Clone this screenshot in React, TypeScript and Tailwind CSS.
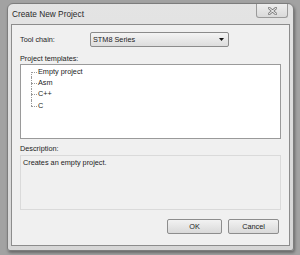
export default function App() {
  const items = ["Empty project", "Asm", "C++", "C"];

  return (
    <div
      className="flex h-[255px] w-[300px] bg-[#a2a2a2] pl-[7px] pt-[3px]"
      style={{ fontFamily: '"Liberation Sans", Arial, sans-serif' }}
    >
      {/* Window frame */}
      <div className="flex h-[248px] w-[287px] flex-col rounded-t-[6px] rounded-b-[3px] border border-[#7d7d7d] bg-gradient-to-b from-[#e4e4e4] to-[#d6d6d6] px-[3px] pb-[4px] shadow-[1px_2px_3px_rgba(0,0,0,0.35)]">
        {/* Title bar */}
        <div className="flex h-[20px] shrink-0 items-start">
          <span className="mt-[5px] pl-[1px] text-[8.3px] leading-[10px] text-[#2a2a2a]">Create New Project</span>
          <div className="ml-auto mr-[2px] flex h-[14px] w-[32px] items-center justify-center rounded-b-[3px] border border-t-0 border-[#9a9a9a] bg-gradient-to-b from-[#eeeeee] to-[#dadada]">
            <svg width="9" height="8" viewBox="0 0 9 8">
              <path d="M1 1 L8 7 M8 1 L1 7" stroke="#6e6e6e" strokeWidth="2.6" strokeLinecap="square" />
              <path d="M1 1 L8 7 M8 1 L1 7" stroke="#e6e6e6" strokeWidth="1.1" strokeLinecap="square" />
            </svg>
          </div>
        </div>

        {/* Client area */}
        <div className="flex flex-1 flex-col border border-[#8c8c8c] bg-[#f0f0f0] px-[8px] pt-[7px] text-[7.3px] leading-[10px] text-[#1c1c1c]">
          <div className="flex h-[15px] items-center">
            <span className="w-[70px]">Tool chain:</span>
            <div className="flex h-[15px] w-[139px] items-center rounded-[2px] border border-[#8b8b8b] bg-gradient-to-b from-[#f4f4f4] to-[#dddddd] pl-[2px] pr-[4px]">
              <span>STM8 Series</span>
              <svg className="ml-auto" width="5" height="3" viewBox="0 0 5 3">
                <path d="M0 0 H5 L2.5 3 Z" fill="#111" />
              </svg>
            </div>
          </div>

          <div className="mt-[7px] h-[10px]">Project templates:</div>
          <div className="flex h-[75px] flex-col border border-[#9a9a9a] bg-white pt-[1px]">
            {items.map((t, i) => (
              <div key={t} className="flex h-[11.3px] items-stretch">
                <div className="ml-[10px] flex w-[6px] flex-col">
                  <div className={"h-1/2 border-l border-dotted border-[#9a9a9a]" + (i === 0 ? " border-transparent" : "")} />
                  <div
                    className={
                      "h-1/2 border-t border-dotted border-[#9a9a9a]" +
                      (i < items.length - 1 ? " border-l" : "")
                    }
                  />
                </div>
                <span className="ml-[1px] self-center">{t}</span>
              </div>
            ))}
          </div>

          <div className="mt-[5px] h-[10px]">Description:</div>
          <div className="mt-[1px] h-[55px] border border-[#dadada] bg-[#f0f0f0] px-[2px] pt-[2px]">
            Creates an empty project.
          </div>

          <div className="mt-[9px] flex justify-end gap-[6px] pr-[2px]">
            <button className="flex h-[15px] w-[55px] items-center justify-center rounded-[2px] border border-[#8d8d8d] bg-gradient-to-b from-[#f2f2f2] to-[#d9d9d9]">
              OK
            </button>
            <button className="flex h-[15px] w-[51px] items-center justify-center rounded-[2px] border border-[#8d8d8d] bg-gradient-to-b from-[#f2f2f2] to-[#d9d9d9]">
              Cancel
            </button>
          </div>
        </div>
      </div>
    </div>
  );
}
